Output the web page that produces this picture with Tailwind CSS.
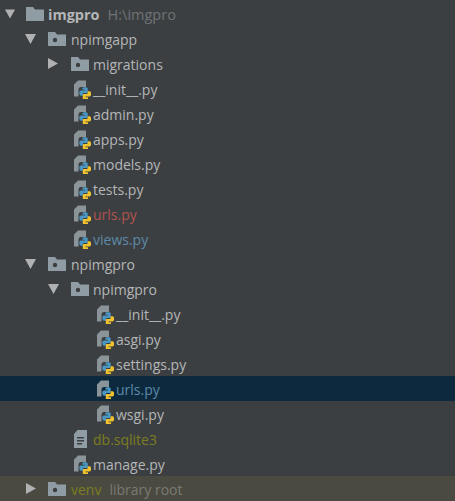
<!DOCTYPE html>
<html lang="en">
<head>
<meta charset="UTF-8">
<title>Project tree</title>
<script src="https://cdn.jsdelivr.net/npm/@tailwindcss/browser@4"></script>
</head>
<body class="bg-[#3c3f41] h-[501px] w-[455px] overflow-hidden text-[#b4b6b7] text-[14px]" style="font-family:'Open Sans','Noto Sans',sans-serif">
<svg class="hidden">
  <symbol id="down" viewBox="0 0 11 10"><path d="M0 0H11L5.500 10Z" fill="#afb1b3"/></symbol>
  <symbol id="right" viewBox="0 0 10 11"><path d="M0 0L10 5.500L0 11Z" fill="#afb1b3"/></symbol>
  <symbol id="folder" viewBox="0 0 18 14"><path d="M0 0H7L9 2.500H18V14H0Z" fill="#8f9ca3"/><circle cx="7" cy="8" r="2.200" fill="#3c3f41"/></symbol>
  <symbol id="root" viewBox="0 0 18 14"><path d="M0 0H7L9 2.500H18V14H0Z" fill="#8f9ca3"/></symbol>
  <symbol id="py" viewBox="0 0 18 20">
    <path d="M5 1.500H13V8H8C6.500 8 5.500 9 5.500 11V17.500H1V5.500Z" fill="#8a9499"/>
    <path d="M9.500 9C9.500 8.500 10.500 8.200 12 8.200C13.500 8.200 14.700 8.500 14.700 9.500V13C14.700 13.600 14.200 14 13.500 14H11C10.300 14 9.900 14.400 9.900 15V16.700H8C7 16.700 6.300 15.500 6.300 13.800C6.300 12.500 7 11.600 8 11.600H12V10.800H9.500Z" fill="#4a97c4"/>
    <path d="M15 20C15 20.500 14 20.800 12.500 20.800C11 20.800 9.800 20.500 9.800 19.500V16C9.800 15.400 10.300 15 11 15H13.500C14.200 15 14.600 14.600 14.600 14V12.300H16.500C17.500 12.300 18.200 13.500 18.200 15.200C18.200 16.500 17.500 17.400 16.500 17.400H12.500V18.200H15Z" fill="#f0c22e"/>
  </symbol>
  <symbol id="text" viewBox="0 0 14 18"><path d="M3.500 0H13V18H0V4Z" fill="#8f9ca3"/><path d="M3 7H10V8.500H3ZM3 10H10V11.500H3ZM3 13H8V14.500H3Z" fill="#3c3f41"/></symbol>
</svg>
<div class="pt-px">
  <div class="flex items-center h-[25px] pl-[5px]">
    <svg class="w-[10px] h-[10px] mr-[11px]"><use href="#down"/></svg>
    <svg class="w-[18px] h-[14px] mr-[4px]"><use href="#root"/></svg>
    <span class="mt-[2px] font-bold text-[14.5px]">imgpro</span><span class="mt-[2px] ml-[8px] text-[14.5px] text-[#6f7375]">H:\imgpro</span>
  </div>
  <div class="flex items-center h-[25px] pl-[25px]">
    <svg class="w-[11px] h-[10px] mr-[12px]"><use href="#down"/></svg>
    <svg class="w-[18px] h-[14px] mr-[5px]"><use href="#folder"/></svg>
    <span class="mt-[2px]">npimgapp</span>
  </div>
  <div class="flex items-center h-[25px] pl-[48px]">
    <svg class="w-[10px] h-[11px] mr-[13px]"><use href="#right"/></svg>
    <svg class="w-[18px] h-[14px] mr-[4px]"><use href="#folder"/></svg>
    <span class="mt-[2px]">migrations</span>
  </div>
  <div class="flex items-center h-[25px] pl-[73px]">
    <svg class="w-[18px] h-[20px] mr-[2px]"><use href="#py"/></svg><span class="mt-[2px]">__init__.py</span>
  </div>
  <div class="flex items-center h-[25px] pl-[73px]">
    <svg class="w-[18px] h-[20px] mr-[2px]"><use href="#py"/></svg><span class="mt-[2px]">admin.py</span>
  </div>
  <div class="flex items-center h-[25px] pl-[73px]">
    <svg class="w-[18px] h-[20px] mr-[2px]"><use href="#py"/></svg><span class="mt-[2px]">apps.py</span>
  </div>
  <div class="flex items-center h-[25px] pl-[73px]">
    <svg class="w-[18px] h-[20px] mr-[2px]"><use href="#py"/></svg><span class="mt-[2px]">models.py</span>
  </div>
  <div class="flex items-center h-[25px] pl-[73px]">
    <svg class="w-[18px] h-[20px] mr-[2px]"><use href="#py"/></svg><span class="mt-[2px]">tests.py</span>
  </div>
  <div class="flex items-center h-[25px] pl-[73px]">
    <svg class="w-[18px] h-[20px] mr-[2px]"><use href="#py"/></svg><span class="mt-[2px] text-[#b0524f]">urls.py</span>
  </div>
  <div class="flex items-center h-[25px] pl-[73px]">
    <svg class="w-[18px] h-[20px] mr-[2px]"><use href="#py"/></svg><span class="mt-[2px] text-[#5c8aa8]">views.py</span>
  </div>
  <div class="flex items-center h-[25px] pl-[25px]">
    <svg class="w-[11px] h-[10px] mr-[12px]"><use href="#down"/></svg>
    <svg class="w-[18px] h-[14px] mr-[5px]"><use href="#folder"/></svg>
    <span class="mt-[2px]">npimgpro</span>
  </div>
  <div class="flex items-center h-[25px] pl-[48px]">
    <svg class="w-[11px] h-[10px] mr-[12px]"><use href="#down"/></svg>
    <svg class="w-[18px] h-[14px] mr-[4px]"><use href="#folder"/></svg>
    <span class="mt-[2px]">npimgpro</span>
  </div>
  <div class="flex items-center h-[25px] pl-[96px]">
    <svg class="w-[18px] h-[20px] mr-[2px]"><use href="#py"/></svg><span class="mt-[2px]">__init__.py</span>
  </div>
  <div class="flex items-center h-[25px] pl-[96px]">
    <svg class="w-[18px] h-[20px] mr-[2px]"><use href="#py"/></svg><span class="mt-[2px]">asgi.py</span>
  </div>
  <div class="flex items-center h-[25px] pl-[96px]">
    <svg class="w-[18px] h-[20px] mr-[2px]"><use href="#py"/></svg><span class="mt-[2px]">settings.py</span>
  </div>
  <div class="flex items-center h-[25px] pl-[96px] bg-[#0d293e]">
    <svg class="w-[18px] h-[20px] mr-[2px]"><use href="#py"/></svg><span class="mt-[2px] text-[#5c8aa8]">urls.py</span>
  </div>
  <div class="flex items-center h-[25px] pl-[96px]">
    <svg class="w-[18px] h-[20px] mr-[2px]"><use href="#py"/></svg><span class="mt-[2px]">wsgi.py</span>
  </div>
  <div class="flex items-center h-[25px] pl-[74px]">
    <svg class="w-[14px] h-[18px] mr-[5px]"><use href="#text"/></svg><span class="mt-[2px] text-[#7b7d1e]">db.sqlite3</span>
  </div>
  <div class="flex items-center h-[25px] pl-[73px]">
    <svg class="w-[18px] h-[20px] mr-[2px]"><use href="#py"/></svg><span class="mt-[2px]">manage.py</span>
  </div>
  <div class="flex items-center h-[25px] pl-[26px] bg-[#4b4a40]">
    <svg class="w-[10px] h-[11px] mr-[12px]"><use href="#right"/></svg>
    <svg class="w-[18px] h-[14px] mr-[5px]"><use href="#folder"/></svg>
    <span class="mt-[2px] text-[#7b7d1e]">venv</span><span class="mt-[2px] ml-[8px] text-[#797a75]">library root</span>
  </div>
</div>
</body>
</html>
